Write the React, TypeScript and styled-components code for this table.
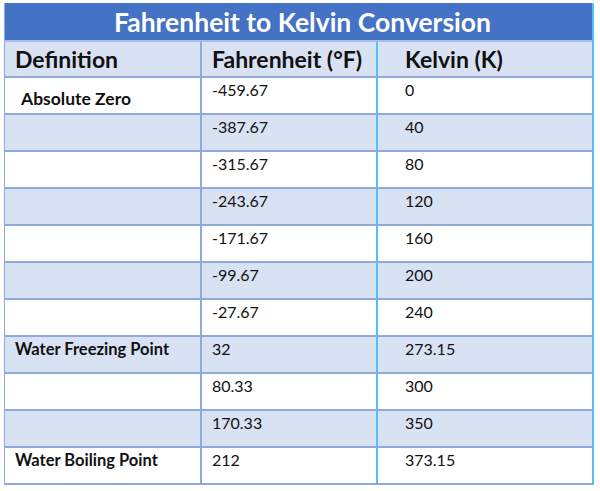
import { createGlobalStyle } from "styled-components";
import styled from "styled-components";

const GlobalStyle = createGlobalStyle`
  body {
    margin: 0;
    background: #ffffff;
    font-family: "Lato", "Open Sans", sans-serif;
  }
`;

const Table = styled.div`
  margin: 3px 0 0 4px;
  width: 590px;
  box-sizing: border-box;
  border-left: 1px solid #8eaadb;
  border-right: 2px solid #4fc3f7;
  border-bottom: 2px solid #8eaadb;
`;

const Title = styled.div`
  height: 37px;
  background: #4472c4;
  color: #ffffff;
  font-weight: 700;
  font-size: 26.5px;
  display: flex;
  align-items: center;
  justify-content: center;
  padding-left: 8px;
  box-sizing: border-box;
`;

const Row = styled.div<{ $alt?: boolean; $head?: boolean }>`
  display: grid;
  grid-template-columns: 197px 176px 1fr;
  height: ${({ $head }) => ($head ? "36px" : "37px")};
  background: ${({ $alt }) => ($alt ? "#d9e2f3" : "#ffffff")};
  border-top: 2px solid ${({ $head }) => ($head ? "#a9bde6" : "#8eaadb")};
  box-sizing: border-box;
`;

const Cell = styled.div<{ $col: number; $head?: boolean; $bold?: boolean; $drop?: boolean }>`
  box-sizing: border-box;
  color: #111111;
  font-size: ${({ $head, $bold, $drop }) =>
    $head ? "23px" : $drop ? "17.5px" : $bold ? "16.5px" : "16px"};
  font-weight: ${({ $head, $bold }) => ($head || $bold ? 700 : 400)};
  padding-left: ${({ $col, $drop }) => ($col === 2 ? "27px" : $drop ? "16px" : "10px")};
  padding-top: ${({ $head, $drop }) => ($head ? "3px" : $drop ? "10px" : "2px")};
  border-right: ${({ $col }) =>
    $col === 0 ? "2px solid #8eaadb" : $col === 1 ? "2px solid #4fc3f7" : "none"};
  white-space: nowrap;
`;

const rows = [
  { def: "Absolute Zero", f: "-459.67", k: "0", drop: true },
  { def: "", f: "-387.67", k: "40" },
  { def: "", f: "-315.67", k: "80" },
  { def: "", f: "-243.67", k: "120" },
  { def: "", f: "-171.67", k: "160" },
  { def: "", f: "-99.67", k: "200" },
  { def: "", f: "-27.67", k: "240" },
  { def: "Water Freezing Point", f: "32", k: "273.15" },
  { def: "", f: "80.33", k: "300" },
  { def: "", f: "170.33", k: "350" },
  { def: "Water Boiling Point", f: "212", k: "373.15" },
];

export default function App() {
  return (
    <>
      <GlobalStyle />
      <Table>
        <Title>Fahrenheit to Kelvin Conversion</Title>
        <Row $head $alt>
          <Cell $col={0} $head>Definition</Cell>
          <Cell $col={1} $head>Fahrenheit (°F)</Cell>
          <Cell $col={2} $head>Kelvin (K)</Cell>
        </Row>
        {rows.map((r, i) => (
          <Row key={i} $alt={i % 2 === 1}>
            <Cell $col={0} $bold $drop={r.drop}>{r.def}</Cell>
            <Cell $col={1}>{r.f}</Cell>
            <Cell $col={2}>{r.k}</Cell>
          </Row>
        ))}
      </Table>
    </>
  );
}
